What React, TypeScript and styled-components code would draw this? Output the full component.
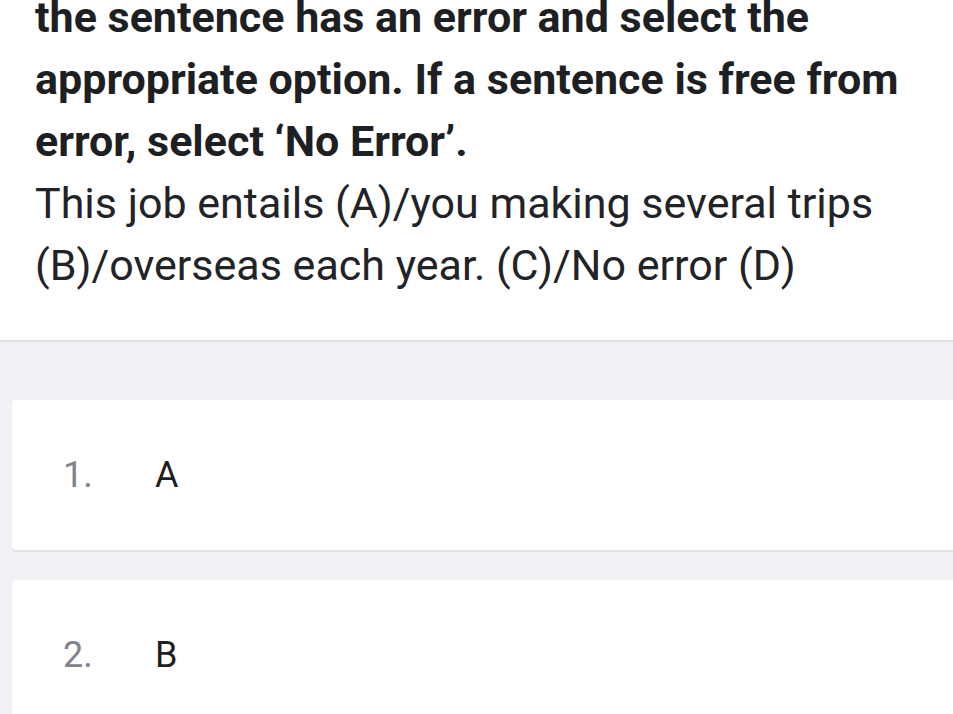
import React from "react";
import styled, { createGlobalStyle } from "styled-components";

const GlobalStyle = createGlobalStyle`
  html, body {
    margin: 0;
    padding: 0;
    background: #f0f1f5;
    font-family: Roboto, "Noto Sans", sans-serif;
    overflow: hidden;
  }
`;

const Page = styled.div`
  width: 953px;
  height: 714px;
  overflow: hidden;
  background: #f0f1f5;
`;

const QuestionBox = styled.div`
  background: #ffffff;
  padding: 0 20px 44px 35px;
  margin-top: -14px;
  border-bottom: 2px solid #dcdfe3;
`;

const Instruction = styled.p`
  margin: 0;
  font-size: 43px;
  line-height: 62px;
  font-weight: 700;
  color: #1e1f22;
`;

const Sentence = styled.p`
  margin: 0;
  font-size: 43px;
  line-height: 62px;
  font-weight: 400;
  color: #222326;
`;

const Options = styled.div`
  display: flex;
  flex-direction: column;
  gap: 30px;
  padding: 58px 0 0 12px;
`;

const OptionCard = styled.div`
  display: flex;
  align-items: center;
  height: 150px;
  background: #ffffff;
  border-radius: 4px 0 0 4px;
  box-shadow: 0 2px 0 #dfe1e6;
  padding-left: 51px;
`;

const OptionNumber = styled.span`
  width: 92px;
  font-size: 36px;
  color: #80838b;
`;

const OptionText = styled.span`
  font-size: 36px;
  color: #1e1f22;
`;

const options = ["A", "B"];

const App = () => {
  return (
    <Page>
      <GlobalStyle />
      <QuestionBox>
        <Instruction>
          the sentence has an error and select the appropriate option. If a
          sentence is free from error, select ‘No Error’.
        </Instruction>
        <Sentence>
          This job entails (A)/you making several trips (B)/overseas each year.
          (C)/No error (D)
        </Sentence>
      </QuestionBox>
      <Options>
        {options.map((opt, i) => (
          <OptionCard key={opt}>
            <OptionNumber>{i + 1}.</OptionNumber>
            <OptionText>{opt}</OptionText>
          </OptionCard>
        ))}
      </Options>
    </Page>
  );
};

export default App;
